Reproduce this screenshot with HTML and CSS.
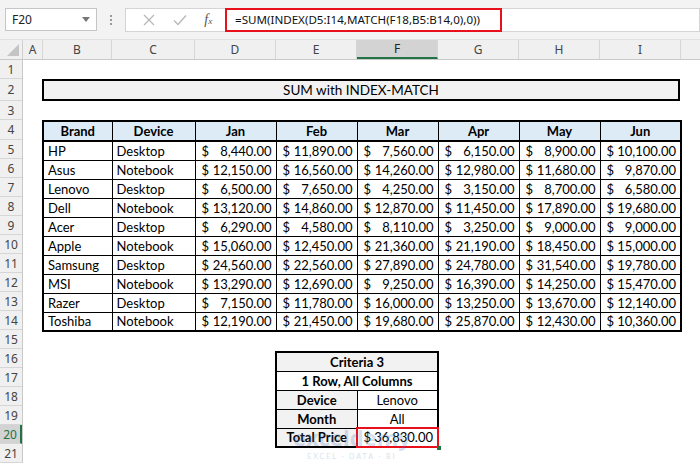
FILE: index.html
```html
<!DOCTYPE html>
<html lang="en">
<head>
  <meta charset="UTF-8" />
  <title>SUM with INDEX-MATCH</title>
  <link rel="stylesheet" href="styles.css">
</head>
<body>
  <div class="toolbar">
    <div class="namebox">
      <span>F20</span>
      <svg class="caret" width="8" height="5" viewBox="0 0 8 5"><path d="M0 0h8L4 5z" fill="#777"/></svg>
    </div>
    <div class="grip"><i></i><i></i><i></i></div>
    <div class="fbuttons">
      <svg width="12" height="12" viewBox="0 0 12 12"><path d="M1 1l10 10M11 1L1 11" stroke="#b8b8b8" stroke-width="1.3" fill="none"/></svg>
      <svg width="14" height="12" viewBox="0 0 14 12"><path d="M1 6.5l4 4L13 1.5" stroke="#b8b8b8" stroke-width="1.4" fill="none"/></svg>
      <span class="fx">f<small>x</small></span>
    </div>
    <div class="formula">
      <div class="formula-hl">=SUM(INDEX(D5:I14,MATCH(F18,B5:B14,0),0))</div>
    </div>
  </div>

  <div class="colheads">
    <div class="corner"><svg width="12" height="12" viewBox="0 0 12 12"><path d="M12 0v12H0z" fill="#c4c4c4"/></svg></div>
    <div class="ch ca">A</div>
    <div class="ch cb">B</div>
    <div class="ch cc">C</div>
    <div class="ch cm">D</div>
    <div class="ch cm">E</div>
    <div class="ch cm active">F</div>
    <div class="ch cm">G</div>
    <div class="ch cm">H</div>
    <div class="ch cm">I</div>
    <div class="ch cj"></div>
  </div>

  <div class="sheet">
    <div class="rownums">
      <div class="rn">1</div>
      <div class="rn tall">2</div>
      <div class="rn">3</div>
      <div class="rn head">4</div>
      <div class="rn">5</div>
      <div class="rn">6</div>
      <div class="rn">7</div>
      <div class="rn">8</div>
      <div class="rn">9</div>
      <div class="rn">10</div>
      <div class="rn">11</div>
      <div class="rn">12</div>
      <div class="rn">13</div>
      <div class="rn">14</div>
      <div class="rn">15</div>
      <div class="rn">16</div>
      <div class="rn">17</div>
      <div class="rn">18</div>
      <div class="rn">19</div>
      <div class="rn active">20</div>
      <div class="rn">21</div>
    </div>

    <div class="cells">
      <div class="gap"></div>
      <div class="title">SUM with INDEX-MATCH</div>
      <div class="gap"></div>

      <table class="data">
        <colgroup>
          <col class="w-brand"><col class="w-device">
          <col class="w-month"><col class="w-month"><col class="w-month">
          <col class="w-month"><col class="w-month"><col class="w-month">
        </colgroup>
        <thead>
          <tr><th>Brand</th><th>Device</th><th>Jan</th><th>Feb</th><th>Mar</th><th>Apr</th><th>May</th><th>Jun</th></tr>
        </thead>
        <tbody id="rows"></tbody>
      </table>

      <div class="gap"></div>

      <table class="criteria">
        <colgroup><col class="w-month"><col class="w-month"></colgroup>
        <tr><th colspan="2" class="shade">Criteria 3</th></tr>
        <tr><th colspan="2">1 Row, All Columns</th></tr>
        <tr><th class="shade">Device</th><td class="center">Lenovo</td></tr>
        <tr><th class="shade">Month</th><td class="center">All</td></tr>
        <tr><th class="shade">Total Price</th><td class="money picked"><span>$</span><span>36,830.00</span></td></tr>
      </table>

      <div class="watermark">
        <div class="wm-name">exceldemy</div>
        <div class="wm-sub">EXCEL · DATA · BI</div>
      </div>
    </div>
  </div>

  <script>
    const data = [
      ['HP', 'Desktop', 8440, 11890, 7560, 6150, 8900, 10100],
      ['Asus', 'Notebook', 12150, 16560, 14260, 12980, 11680, 9870],
      ['Lenovo', 'Desktop', 6500, 7650, 4250, 3150, 8700, 6580],
      ['Dell', 'Notebook', 13120, 14860, 12870, 11450, 17890, 19680],
      ['Acer', 'Desktop', 6290, 4580, 8110, 3250, 9000, 9000],
      ['Apple', 'Notebook', 15060, 12450, 21360, 21190, 18450, 15000],
      ['Samsung', 'Desktop', 24560, 22560, 27890, 24780, 31540, 19780],
      ['MSI', 'Notebook', 13290, 12690, 9250, 16390, 14250, 15470],
      ['Razer', 'Desktop', 7150, 11780, 16000, 13250, 13670, 12140],
      ['Toshiba', 'Notebook', 12190, 21450, 19680, 25870, 12430, 10360]
    ];

    const fmt = n => n.toLocaleString('en-US', { minimumFractionDigits: 2 });
    const body = document.getElementById('rows');

    data.forEach(row => {
      const tr = document.createElement('tr');
      row.forEach((v, i) => {
        const td = document.createElement('td');
        if (i < 2) {
          td.textContent = v;
        } else {
          td.className = 'money';
          td.innerHTML = `<span>$</span><span>${fmt(v)}</span>`;
        }
        tr.appendChild(td);
      });
      body.appendChild(tr);
    });
  </script>
</body>
</html>
```

FILE: styles.css
```css
* { box-sizing: border-box; }
body {
  margin: 0;
  width: 700px;
  height: 463px;
  overflow: hidden;
  background: #fff;
  font-family: Lato, 'Liberation Sans', sans-serif;
  color: #000;
}

/* formula bar */
.toolbar {
  height: 40px;
  background: #f3f3f3;
  display: flex;
  align-items: center;
  padding-left: 5px;
  border-bottom: 1px solid #e1e1e1;
}
.namebox {
  width: 92px;
  height: 23px;
  background: #fff;
  border: 1px solid #c6c6c6;
  display: flex;
  align-items: center;
  justify-content: space-between;
  padding: 0 6px 0 6px;
  font-family: 'Noto Sans', sans-serif;
  font-size: 12px;
  color: #222;
}
.grip {
  width: 28px;
  display: flex;
  flex-direction: column;
  align-items: center;
  gap: 2px;
}
.grip i {
  width: 2px;
  height: 2px;
  background: #9a9a9a;
}
.fbuttons {
  width: 100px;
  height: 24px;
  background: #fff;
  border: 1px solid #d4d4d4;
  border-right: none;
  display: flex;
  align-items: center;
  justify-content: space-around;
  padding: 0 4px 0 8px;
}
.fx {
  font-family: 'Liberation Serif', serif;
  font-style: italic;
  font-size: 14px;
  color: #555;
}
.fx small { font-size: 9px; }
.formula {
  flex: 1;
  height: 24px;
  background: #fff;
  border: 1px solid #d4d4d4;
  border-left: none;
  display: flex;
}
.formula-hl {
  width: 277px;
  height: 24px;
  margin-top: -1px;
  border: 2px solid #e8101c;
  padding: 0 0 0 8px;
  font-family: 'Noto Sans', sans-serif;
  font-size: 11.6px;
  line-height: 20px;
  color: #111;
  white-space: nowrap;
}

/* column headers */
.colheads {
  display: flex;
  height: 20px;
  background: #f0f0f0;
  border-bottom: 1px solid #c9c9c9;
  font-family: 'Noto Sans', sans-serif;
  font-size: 12px;
  color: #444;
}
.corner {
  width: 23px;
  border-right: 1px solid #d0d0d0;
  display: flex;
  align-items: flex-end;
  justify-content: flex-end;
  padding: 0 3px 3px 0;
}
.ch {
  border-right: 1px solid #d6d6d6;
  display: flex;
  align-items: center;
  justify-content: center;
}
.ca { width: 20px; }
.cb { width: 69px; }
.cc { width: 83px; }
.cm { width: 81px; }
.cj { flex: 1; border-right: none; }
.ch.active {
  background: #d3d3d3;
  border-bottom: 2px solid #217346;
  color: #222;
}

/* sheet */
.sheet {
  display: flex;
}
.rownums {
  width: 23px;
  background: #f0f0f0;
  border-right: 1px solid #c9c9c9;
  font-family: 'Noto Sans', sans-serif;
  font-size: 12px;
  color: #444;
}
.rn {
  height: 19px;
  border-bottom: 1px solid #d6d6d6;
  display: flex;
  align-items: center;
  justify-content: center;
}
.rn.tall { height: 22px; }
.rn.head { height: 20px; }
.rn.active {
  background: #d3d3d3;
  border-right: 2px solid #217346;
  color: #217346;
}

.cells {
  position: relative;
  flex: 1;
  padding-left: 19px;
}
.gap { height: 19px; }
.title {
  width: 638px;
  height: 22px;
  background: #f2f2f2;
  border: 2px solid #000;
  text-align: center;
  font-size: 13.5px;
  line-height: 18px;
}

table {
  border-collapse: collapse;
  table-layout: fixed;
  font-size: 13px;
}
th, td {
  border: 1px solid #000;
  height: 19px;
  padding: 0 4px;
  white-space: nowrap;
}
.data {
  width: 638px;
  border: 2px solid #000;
}
.data thead th {
  height: 20px;
  background: #ddebf7;
  border-bottom: 2px solid #000;
}
.w-brand { width: 69px; }
.w-device { width: 83px; }
.w-month { width: 81px; }

.money span:first-child { float: left; padding-left: 2px; }
.money span:last-child { float: right; }

.criteria {
  width: 162px;
  margin-left: 233px;
  border: 2px solid #000;
}
.criteria th { font-weight: bold; }
.criteria .shade { background: #f2f2f2; }
.criteria .center { text-align: center; }
.criteria .picked {
  outline: 2px solid #e8101c;
  outline-offset: -1px;
  position: relative;
}
.criteria .picked::after {
  content: '';
  position: absolute;
  right: -4px;
  bottom: -4px;
  width: 4px;
  height: 4px;
  background: #217346;
}

.watermark {
  position: absolute;
  left: 270px;
  top: 362px;
  text-align: center;
  opacity: 0.22;
  pointer-events: none;
}
.wm-name {
  font-family: 'Open Sans', sans-serif;
  font-size: 22px;
  font-weight: bold;
  color: #4a78b8;
}
.wm-sub {
  font-size: 7px;
  letter-spacing: 2px;
  color: #4a78b8;
}
```
